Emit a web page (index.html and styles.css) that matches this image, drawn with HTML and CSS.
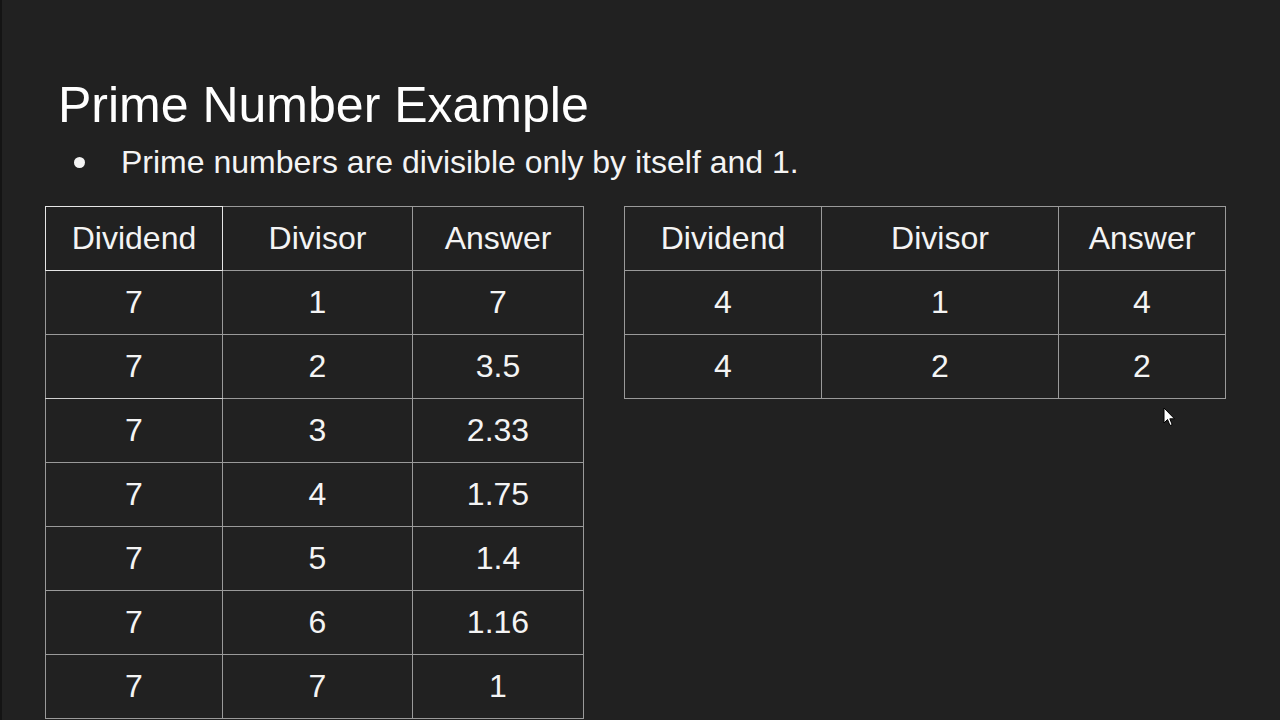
FILE: index.html
```html
<!DOCTYPE html>
<html lang="en">
<head>
<meta charset="utf-8">
<title>Prime Number Example</title>
<link rel="stylesheet" href="styles.css">
</head>
<body>
<main class="slide">
  <h1 class="title">Prime Number Example</h1>
  <div class="bullet">
    <span class="dot"></span>
    <span class="bullet-text">Prime numbers are divisible only by itself and 1.</span>
  </div>
  <div class="tables">
    <table class="grid grid-left">
      <colgroup><col class="c177"><col class="c190"><col class="c171"></colgroup>
      <tr><td class="sel">Dividend</td><td>Divisor</td><td>Answer</td></tr>
      <tr><td>7</td><td>1</td><td>7</td></tr>
      <tr><td class="hl">7</td><td>2</td><td>3.5</td></tr>
      <tr><td>7</td><td>3</td><td>2.33</td></tr>
      <tr><td>7</td><td>4</td><td>1.75</td></tr>
      <tr><td>7</td><td>5</td><td>1.4</td></tr>
      <tr><td>7</td><td>6</td><td>1.16</td></tr>
      <tr><td>7</td><td>7</td><td>1</td></tr>
    </table>
    <table class="grid grid-right">
      <colgroup><col class="c197"><col class="c237"><col class="c167"></colgroup>
      <tr><td>Dividend</td><td>Divisor</td><td>Answer</td></tr>
      <tr><td>4</td><td>1</td><td>4</td></tr>
      <tr><td>4</td><td>2</td><td>2</td></tr>
    </table>
  </div>
  <svg class="cursor" width="13" height="20" viewBox="0 0 13 20" aria-hidden="true">
    <path d="M1 1 L1 16 L4.5 12.5 L7 18.5 L9.2 17.6 L6.8 11.8 L11.5 11.8 Z" fill="#ffffff" stroke="#000000" stroke-width="1" stroke-linejoin="round"/>
  </svg>
</main>
</body>
</html>
```

FILE: styles.css
```css
html, body {
  margin: 0;
  padding: 0;
  width: 1280px;
  height: 720px;
  overflow: hidden;
  background: #212121;
}

body {
  font-family: "Liberation Sans", Arial, sans-serif;
  color: #ffffff;
}

.slide {
  position: relative;
  box-sizing: border-box;
  width: 1280px;
  height: 720px;
  border-left: 2px solid #141414;
  padding: 77px 0 0 43px;
}

.title {
  margin: 0 0 0 13px;
  font-size: 50px;
  line-height: 56px;
  font-weight: normal;
  color: #ffffff;
}

.bullet {
  display: flex;
  align-items: center;
  margin: 9px 0 0 29px;
  height: 40px;
}

.dot {
  width: 11px;
  height: 11px;
  border-radius: 50%;
  background: #f4f4f4;
  margin-right: 36px;
  flex: none;
}

.bullet-text {
  font-size: 32px;
  line-height: 40px;
  color: #f4f4f4;
}

.tables {
  display: flex;
  align-items: flex-start;
  gap: 40px;
  margin-top: 24px;
}

.grid {
  border-collapse: collapse;
  table-layout: fixed;
  font-size: 32px;
  color: #f4f4f4;
}

.grid-left { width: 538px; }
.grid-right { width: 601px; }

.c177 { width: 177px; }
.c190 { width: 190px; }
.c171 { width: 171px; }
.c197 { width: 197px; }
.c237 { width: 237px; }
.c167 { width: 167px; }

.grid tr { height: 64px; }

.grid td {
  border: 1px solid #9a9a9a;
  text-align: center;
  vertical-align: middle;
  padding: 0 0 2px 0;
  line-height: 36px;
}

.grid td.sel {
  border-color: #e6e6e6;
}

.grid td.hl {
  border-bottom-color: #d0d0d0;
}

.cursor {
  position: absolute;
  left: 1161px;
  top: 407px;
}
```
